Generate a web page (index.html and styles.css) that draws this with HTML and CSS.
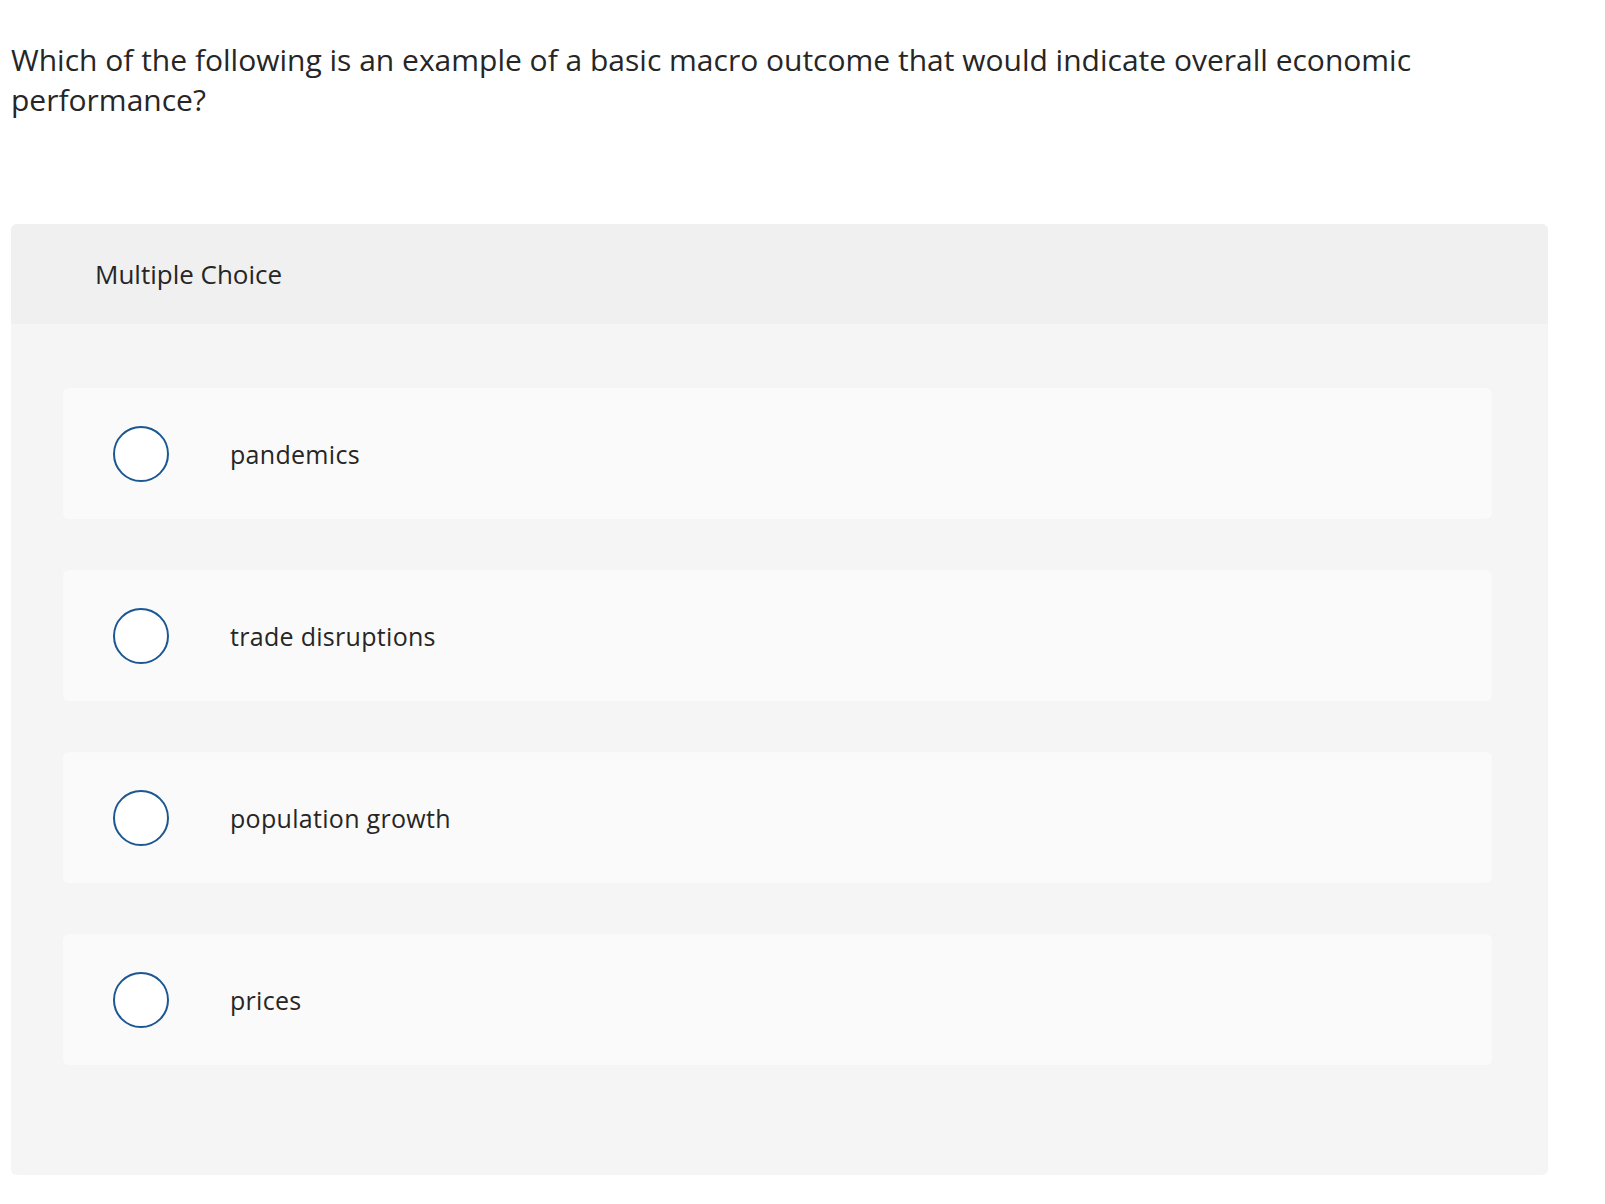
FILE: index.html
```html
<!DOCTYPE html>
<html lang="en">
<head>
<meta charset="utf-8">
<title>Multiple Choice</title>
<link rel="stylesheet" href="styles.css">
</head>
<body>
<div class="page">
  <p class="question">Which of the following is an example of a basic macro outcome that would indicate overall economic performance?</p>
  <section class="card">
    <header class="card-head">Multiple Choice</header>
    <div class="card-body">
      <label class="option"><span class="radio"></span><span class="opt-text">pandemics</span></label>
      <label class="option"><span class="radio"></span><span class="opt-text">trade disruptions</span></label>
      <label class="option"><span class="radio"></span><span class="opt-text">population growth</span></label>
      <label class="option"><span class="radio"></span><span class="opt-text">prices</span></label>
    </div>
  </section>
</div>
</body>
</html>
```
FILE: styles.css
```css
html, body {
  margin: 0;
  padding: 0;
  background: #ffffff;
}
body {
  font-family: "Open Sans", "Lato", sans-serif;
  color: #222222;
}
.page {
  padding: 0 57px 0 11px;
}
.question {
  margin: 0;
  padding: 40px 0 0 0;
  font-size: 30px;
  line-height: 40px;
  max-width: 1460px;
  color: #262626;
}
.card {
  margin-top: 104px;
  background: #f5f5f5;
  border-radius: 6px;
  width: 1537px;
  overflow: hidden;
}
.card-head {
  height: 100px;
  background: #f0f0f0;
  padding-left: 84px;
  font-size: 26px;
  line-height: 100px;
  box-sizing: border-box;
  color: #262626;
}
.card-body {
  padding: 64px 56px 110px 52px;
  display: flex;
  flex-direction: column;
  gap: 51px;
}
.option {
  height: 131px;
  background: #fafafa;
  border-radius: 6px;
  display: flex;
  align-items: center;
  padding-left: 50px;
  box-sizing: border-box;
}
.radio {
  width: 56px;
  height: 56px;
  box-sizing: border-box;
  border: 2px solid #1b5793;
  border-radius: 50%;
  background: #ffffff;
  flex: none;
}
.opt-text {
  margin-left: 61px;
  font-size: 25px;
  letter-spacing: 0.3px;
  color: #262626;
}
```
